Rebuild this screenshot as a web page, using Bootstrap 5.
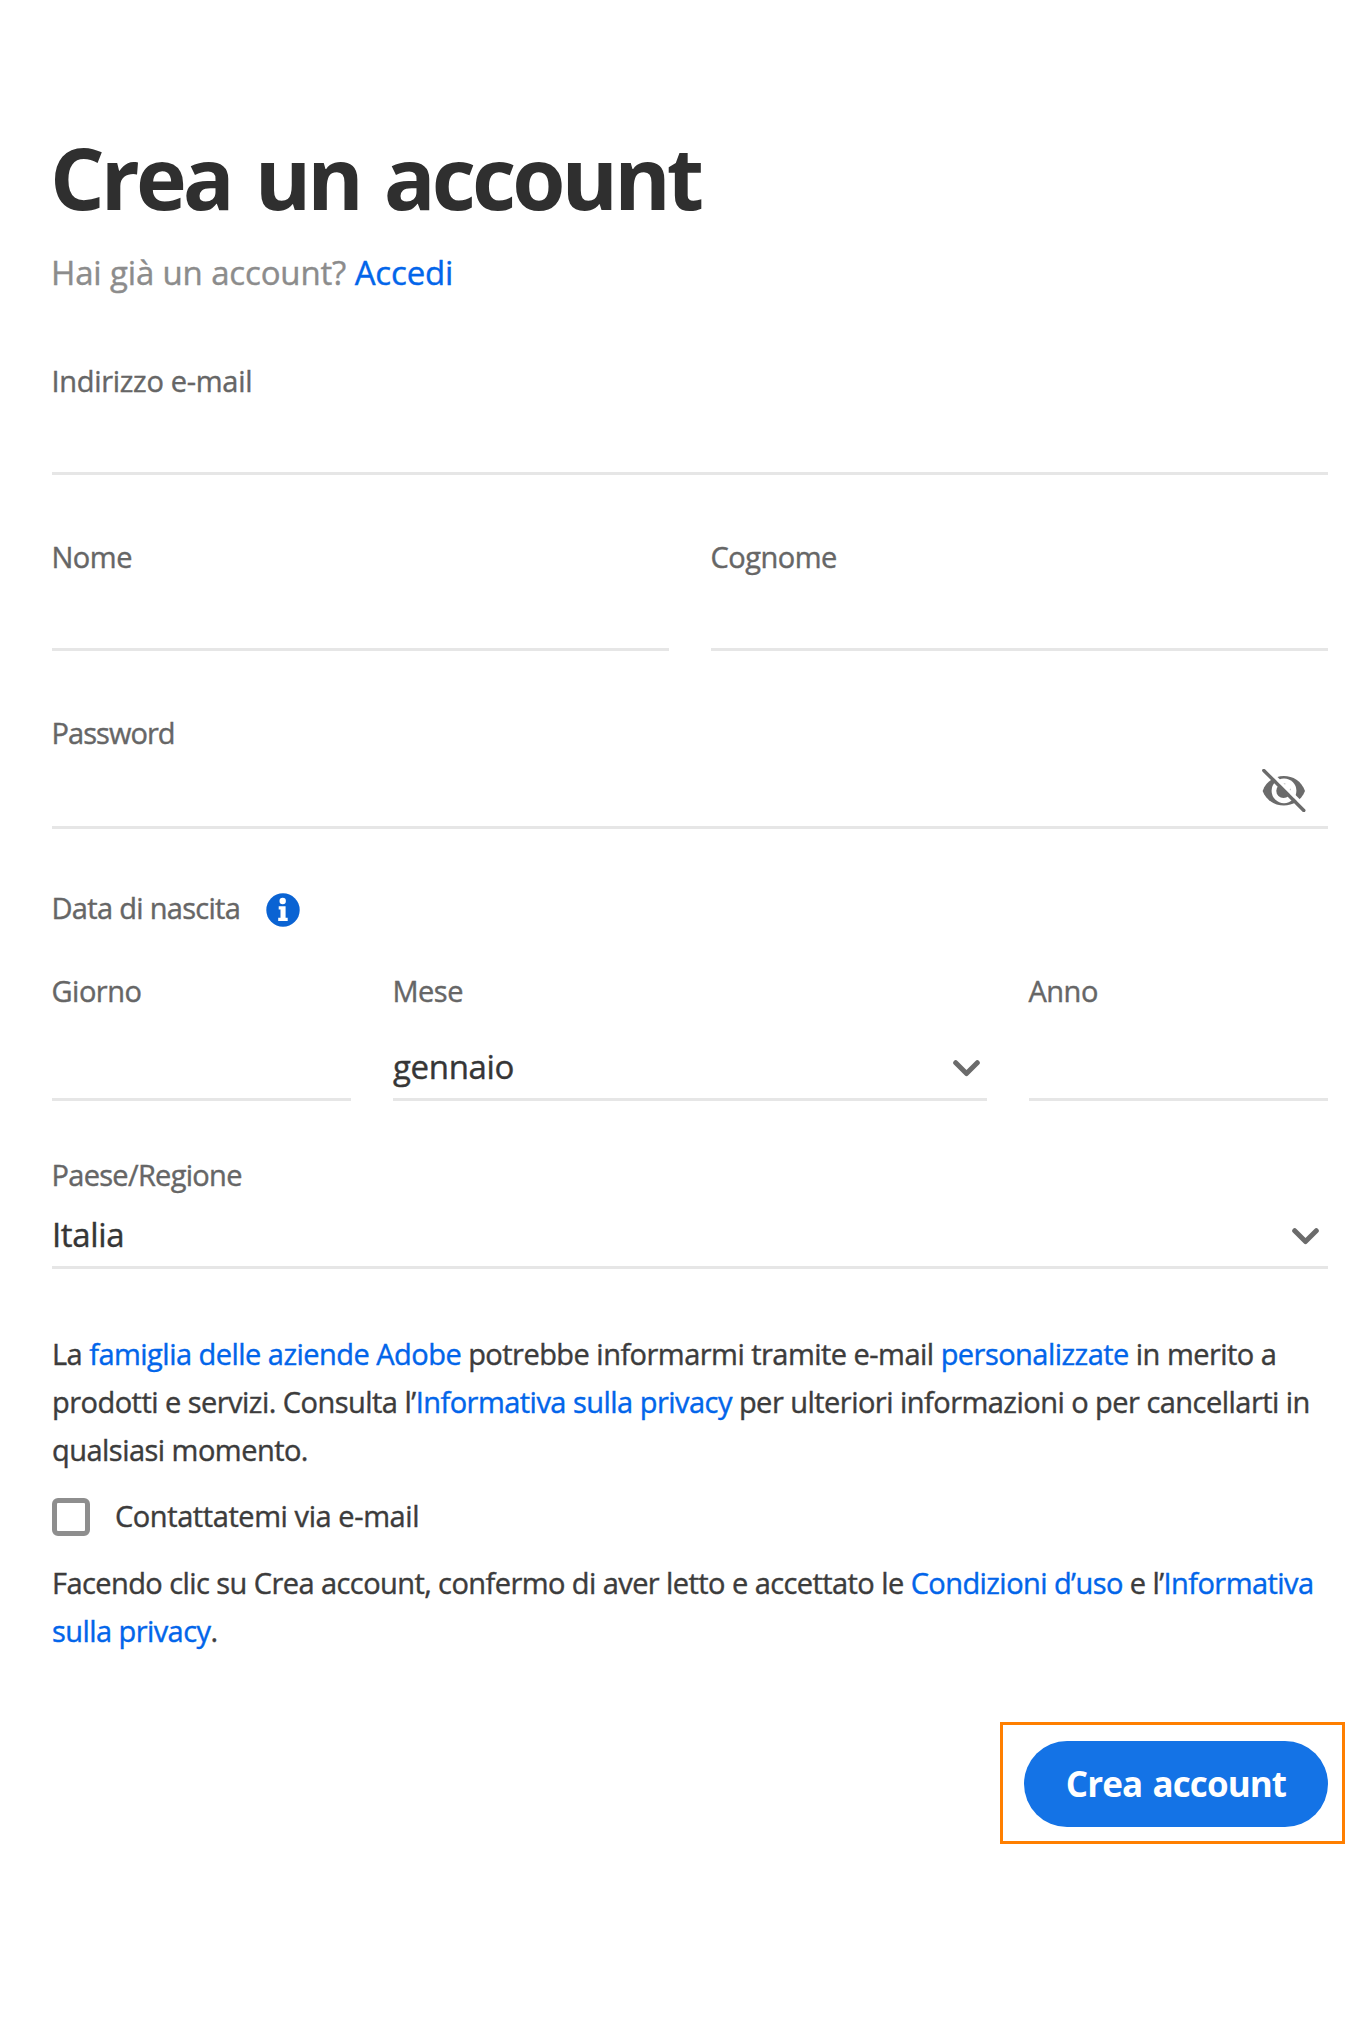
<!DOCTYPE html>
<html lang="it">
<head>
<meta charset="utf-8">
<meta name="viewport" content="width=device-width, initial-scale=1">
<title>Crea un account</title>
<link rel="stylesheet" href="https://cdn.jsdelivr.net/npm/bootstrap@5.3.0/dist/css/bootstrap.min.css">
<style>
body{font-family:"Open Sans","Noto Sans",sans-serif;color:#3c3c3c;background:#fff}
.page{max-width:1364px;min-height:2025px;padding:127px 36px 0 52px;-webkit-text-stroke:.4px currentColor}
.title{font-size:86px;line-height:100px;letter-spacing:-3.95px;word-spacing:5.500px;color:#2f2f2f;margin-left:-2px;-webkit-text-stroke:0}
.subtitle{font-size:33px;line-height:48px;letter-spacing:-.15px;color:#8c8c8c;margin-top:22px;text-indent:-1px}
.page a{color:#0265ea;text-decoration:none}
.lbl{display:block;font-size:29px;line-height:42px;letter-spacing:-.5px;color:#666;white-space:nowrap;text-indent:-.5px}
.lbl-wide{letter-spacing:-.3px}
.lbl-tight{letter-spacing:-.7px}
.lbl-tighter{letter-spacing:-.95px}
.field{border-bottom:3px solid #e6e6e6}
.stack-first{margin-top:63px}
.stack{margin-top:61px}
.cols{gap:42px}
.col-half{flex:1 1 0;min-width:0}
.col-short{width:299px}
.line-input{display:block;width:100%;height:70px;border:0;padding:0;background:none;font-size:33px;outline:0}
.pass-row{height:72px;padding:15px 22px 0 0}
.pass-row .line-input{height:50px}
.birth-head{margin-top:58px;height:42px}
.birth-head svg{margin:6px 0 0 26px}
.birth-row{margin-top:41px}
.birth-row .line-input{height:86px}
.picker{font-size:33px;line-height:48px;letter-spacing:-.35px;color:#363636}
.picker-month{height:86px;padding:31px 7px 0 0}
.picker-country{height:70px;padding:15px 9px 0 0}
.picker svg{margin-top:17px}
.country{margin-top:53px}
.legal{font-size:29px;line-height:48px;letter-spacing:-.53px;white-space:nowrap}
.legal-terms{letter-spacing:-.57px}
.consent{margin:24px 0 23px;height:38px;gap:25px;font-size:29px;line-height:36px;letter-spacing:-.42px}
.consent-box{appearance:none;flex:none;width:38px;height:38px;border:5px solid #8e8e8e;border-radius:6px;background:#fff}
.cta{border:3px solid #ff7f00;width:345px;height:122px;padding:16px 14px 14px 21px;margin:67px -17px 0 auto}
.cta .btn{background:#1473e6;font-size:35px;line-height:1;letter-spacing:-.9px;word-spacing:2px;height:86px;border:0;padding:0 0 2px;-webkit-text-stroke:0}
</style>
<script src="https://cdn.jsdelivr.net/npm/bootstrap@5.3.0/dist/js/bootstrap.bundle.min.js"></script>
</head>
<body>
<main class="page">
  <h1 class="title fw-bold mb-0">Crea un account</h1>
  <p class="subtitle mb-0">Hai già un account? <a href="#">Accedi</a></p>

  <form>
    <div class="field stack-first">
      <label class="lbl lbl-wide" for="email">Indirizzo e-mail</label>
      <input class="line-input" id="email" type="email">
    </div>

    <div class="d-flex cols stack">
      <div class="field col-half">
        <label class="lbl" for="first">Nome</label>
        <input class="line-input" id="first" type="text">
      </div>
      <div class="field col-half">
        <label class="lbl" for="last">Cognome</label>
        <input class="line-input" id="last" type="text">
      </div>
    </div>

    <div class="field stack">
      <label class="lbl lbl-tighter" for="pass">Password</label>
      <div class="pass-row d-flex align-items-start">
        <input class="line-input" id="pass" type="password">
        <svg class="flex-shrink-0" width="44" height="43" viewBox="0 0 44 43" aria-hidden="true">
          <path d="M.6 22C4 12 13 7 21.900 7S39.500 12 43 22C39.500 31.500 30.500 36.500 21.900 36.500S4 31.500 .6 22z" fill="#6b6b6b"/>
          <circle cx="22" cy="21.800" r="12.400" fill="#fff"/>
          <circle cx="21.500" cy="21.800" r="7.200" fill="#6b6b6b"/>
          <circle cx="25.800" cy="17.600" r="3.300" fill="#fff"/>
          <path d="M5 0l38 38" stroke="#fff" stroke-width="3.400"/>
          <path d="M1.800 1.500l40 40" stroke="#6b6b6b" stroke-width="3.400" stroke-linecap="round"/>
        </svg>
      </div>
    </div>

    <div class="birth-head d-flex align-items-start">
      <span class="lbl lbl-tight">Data di nascita</span>
      <svg class="flex-shrink-0" width="34" height="34" viewBox="0 0 34 34" aria-hidden="true">
        <circle cx="17" cy="17" r="16.700" fill="#0a63d3"/>
        <circle cx="16.700" cy="8" r="3.200" fill="#fff"/>
        <path d="M12.700 13.200h6.900v11.600h2.100v3.200h-9.500v-3.200h2.300v-8.400h-1.800z" fill="#fff"/>
      </svg>
    </div>

    <div class="birth-row d-flex cols">
      <div class="field col-short">
        <label class="lbl" for="day">Giorno</label>
        <input class="line-input" id="day" type="text">
      </div>
      <div class="field flex-grow-1">
        <span class="lbl">Mese</span>
        <div class="picker picker-month d-flex justify-content-between align-items-start" role="button">
          <span>gennaio</span>
          <svg width="27" height="17" viewBox="0 0 27 17" fill="none" stroke="#6b6b6b" stroke-width="5" stroke-linecap="round" stroke-linejoin="round"><path d="M2.700 2.700l10.800 10.800L24.300 2.700"/></svg>
        </div>
      </div>
      <div class="field col-short">
        <label class="lbl" for="year">Anno</label>
        <input class="line-input" id="year" type="text">
      </div>
    </div>

    <div class="field country">
      <span class="lbl lbl-tight">Paese/Regione</span>
      <div class="picker picker-country d-flex justify-content-between align-items-start" role="button">
        <span>Italia</span>
        <svg width="27" height="17" viewBox="0 0 27 17" fill="none" stroke="#6b6b6b" stroke-width="5" stroke-linecap="round" stroke-linejoin="round"><path d="M2.700 2.700l10.800 10.800L24.300 2.700"/></svg>
      </div>
    </div>

    <p class="legal stack mb-0">La <a href="#">famiglia delle aziende Adobe</a> potrebbe informarmi tramite e-mail <a href="#">personalizzate</a> in merito a<br>prodotti e servizi. Consulta l’<a href="#">Informativa sulla privacy</a> per ulteriori informazioni o per cancellarti in<br>qualsiasi momento.</p>

    <label class="consent d-flex align-items-start"><input class="consent-box m-0" type="checkbox"><span>Contattatemi via e-mail</span></label>

    <p class="legal legal-terms mb-0">Facendo clic su Crea account, confermo di aver letto e accettato le <a href="#">Condizioni d’uso</a> e l’<a href="#">Informativa<br>sulla privacy</a>.</p>

    <div class="cta"><button type="button" class="btn btn-primary rounded-pill w-100 fw-bold">Crea account</button></div>
  </form>
</main>
</body>
</html>
